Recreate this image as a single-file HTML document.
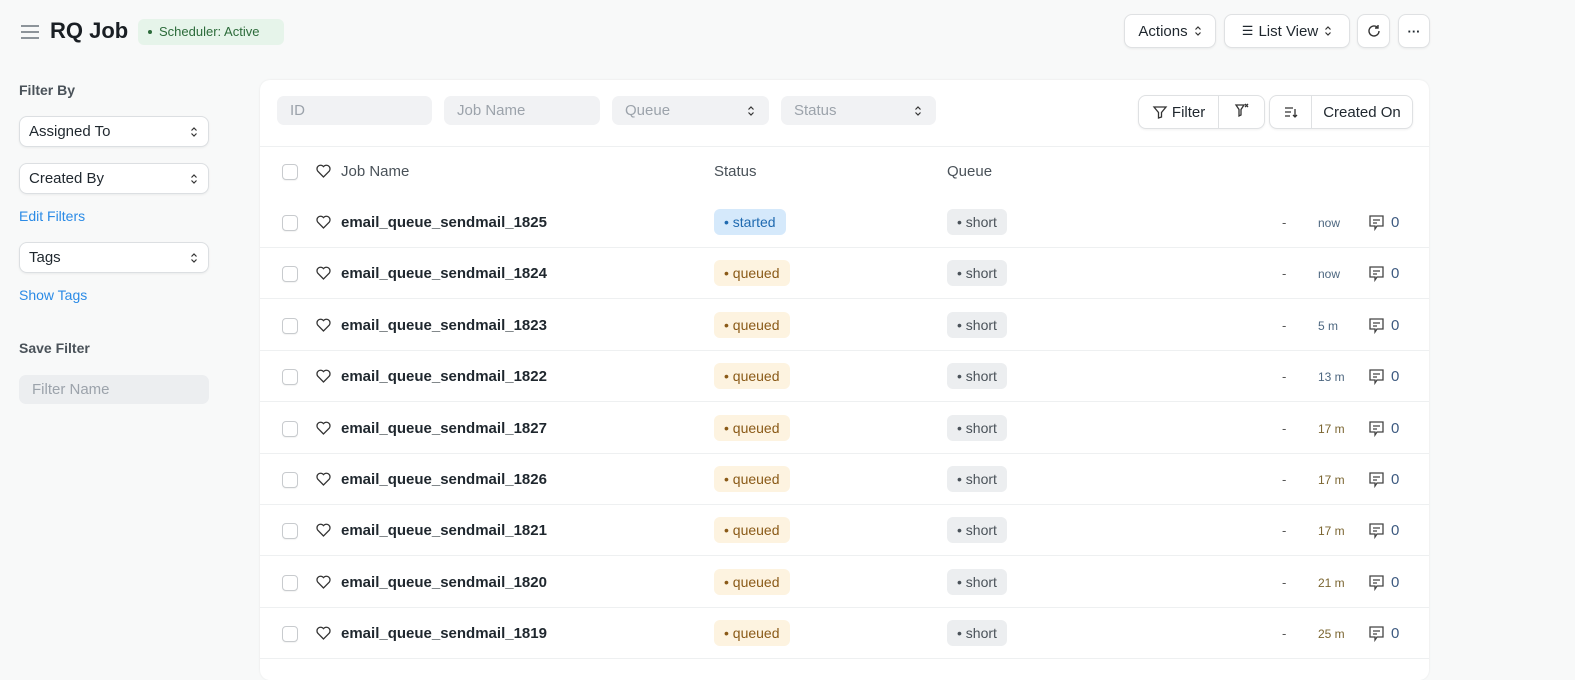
<!DOCTYPE html>
<html><head><meta charset="utf-8"><style>
*{box-sizing:border-box;margin:0;padding:0}
body{width:1575px;height:664px;overflow:hidden;background:#f8f9f9;font-family:"Liberation Sans",sans-serif;color:#1f272e;position:relative}
.a{position:absolute}
.btn{position:absolute;background:#fff;border:1px solid #dfe1e3;border-radius:8px;box-shadow:0 1px 2px rgba(0,0,0,.06);font-size:15px;display:flex;align-items:center;justify-content:center}
.sel{position:absolute;left:19px;width:190px;height:31px;background:#fff;border:1px solid #dcdfe2;border-radius:8px;box-shadow:0 1px 2px rgba(0,0,0,.06);font-size:15px;padding-left:9px;line-height:29px}
.chev{position:absolute;right:10px;top:9px}
.inp{position:absolute;top:96px;height:29px;background:#f1f2f4;border-radius:7px;color:#9ca3ab;font-size:15px;padding-left:13px;line-height:29px}
.lbl{position:absolute;left:19px;font-size:14px;color:#4a5259;font-weight:bold}
.link{position:absolute;left:19px;font-size:14px;color:#2b8be6}
.card{position:absolute;left:260px;top:80px;width:1169px;height:600px;background:#fff;border-radius:10px;box-shadow:0 0 2px rgba(0,0,0,.08)}
.row{position:absolute;left:260px;width:1169px;height:51px;border-bottom:1px solid #eef0f1}
.cb{position:absolute;left:22px;width:16px;height:16px;border:1px solid #c8cbce;border-radius:4px;background:#fff;box-shadow:0 1px 1px rgba(0,0,0,.05)}
.hrt{position:absolute;left:56px}
.nm{position:absolute;left:81px;font-size:15px;font-weight:bold}
.pill{position:absolute;height:26px;border-radius:6px;font-size:14px;line-height:26px;padding:0 10px}
.st{left:454px;background:#d5e9fb;color:#1f6ab0}
.qu{left:454px;background:#fdf3e0;color:#8a5a17}
.sh{left:687px;background:#eceef0;color:#4a5259}
.dash{position:absolute;left:1022px;font-size:13px;color:#555}
.tm{position:absolute;left:1058px;font-size:12px;color:#4d6780}
.cm{position:absolute;left:1108px;}
.zero{position:absolute;left:1131px;font-size:15px;color:#3d5a80}
</style></head><body>
<div class="a" style="left:21px;top:25px;width:18px;height:2px;background:#8d949a;box-shadow:0 6px 0 #8d949a,0 12px 0 #8d949a"></div>
<div class="a" style="left:50px;top:18px;font-size:22px;font-weight:bold;color:#1a1f24">RQ Job</div>
<div class="a" style="left:138px;top:19px;width:146px;height:26px;background:#e6f4ea;border-radius:6px;font-size:13px;color:#2c6b3a;line-height:26px;padding-left:21px">Scheduler: Active<span class="a" style="left:10px;top:11px;width:4px;height:4px;border-radius:50%;background:#2c6b3a"></span></div>
<div class="btn" style="left:1124px;top:14px;width:92px;height:34px">Actions <svg style="margin-left:6px" width="8" height="12" viewBox="0 0 8 12" fill="none" stroke="#333" stroke-width="1.2"><path d="M1.5 4.5L4 2l2.5 2.5M1.5 7.5L4 10l2.5-2.5"/></svg></div>
<div class="btn" style="left:1224px;top:14px;width:126px;height:34px"><span style="font-size:13px;margin-right:5px">☰</span>List View <svg style="margin-left:6px" width="8" height="12" viewBox="0 0 8 12" fill="none" stroke="#333" stroke-width="1.2"><path d="M1.5 4.5L4 2l2.5 2.5M1.5 7.5L4 10l2.5-2.5"/></svg></div>
<div class="btn" style="left:1357px;top:14px;width:33px;height:34px"><svg width="16" height="16" viewBox="0 0 16 16" fill="none" stroke="#333" stroke-width="1.4"><path d="M13 8a5 5 0 1 1-1.6-3.7M12 2v3h-3"/></svg></div>
<div class="btn" style="left:1398px;top:14px;width:32px;height:34px;font-weight:bold;font-size:13px">···</div>

<div class="lbl" style="top:82px">Filter By</div>
<div class="sel" style="top:116px">Assigned To<svg class="chev" width="8" height="12" viewBox="0 0 8 12" fill="none" stroke="#333" stroke-width="1.2"><path d="M1.5 4.5L4 2l2.5 2.5M1.5 7.5L4 10l2.5-2.5"/></svg></div>
<div class="sel" style="top:163px">Created By<svg class="chev" width="8" height="12" viewBox="0 0 8 12" fill="none" stroke="#333" stroke-width="1.2"><path d="M1.5 4.5L4 2l2.5 2.5M1.5 7.5L4 10l2.5-2.5"/></svg></div>
<div class="link" style="top:208px">Edit Filters</div>
<div class="sel" style="top:242px">Tags<svg class="chev" width="8" height="12" viewBox="0 0 8 12" fill="none" stroke="#333" stroke-width="1.2"><path d="M1.5 4.5L4 2l2.5 2.5M1.5 7.5L4 10l2.5-2.5"/></svg></div>
<div class="link" style="top:287px">Show Tags</div>
<div class="lbl" style="top:340px">Save Filter</div>
<div class="a" style="left:19px;top:375px;width:190px;height:29px;background:#eceef0;border-radius:7px;font-size:15px;color:#9ca3ab;line-height:29px;padding-left:13px">Filter Name</div>

<div class="card"></div>
<div class="inp" style="left:277px;width:155px">ID</div>
<div class="inp" style="left:444px;width:156px">Job Name</div>
<div class="inp" style="left:612px;width:157px">Queue<svg class="a" style="right:14px;top:9px" width="8" height="12" viewBox="0 0 8 12" fill="none" stroke="#333" stroke-width="1.2"><path d="M1.5 4.5L4 2l2.5 2.5M1.5 7.5L4 10l2.5-2.5"/></svg></div>
<div class="inp" style="left:781px;width:155px">Status<svg class="a" style="right:14px;top:9px" width="8" height="12" viewBox="0 0 8 12" fill="none" stroke="#333" stroke-width="1.2"><path d="M1.5 4.5L4 2l2.5 2.5M1.5 7.5L4 10l2.5-2.5"/></svg></div>
<div class="btn" style="left:1138px;top:95px;width:127px;height:34px;justify-content:flex-start"><span style="width:80px;display:flex;align-items:center;justify-content:center;border-right:1px solid #dfe1e3;height:100%"><svg width="16" height="16" viewBox="0 0 16 16" fill="none" stroke="#333" stroke-width="1.3"><path d="M2 3h12l-4.5 5.5V13l-3 1V8.5z"/></svg>&nbsp;Filter</span><span style="flex:1;text-align:center"><svg width="16" height="16" viewBox="0 0 16 16" fill="none" stroke="#333" stroke-width="1.3"><path d="M2 3h8l-3 4.5V13l-2 1V7.5zM11 2l3 3M14 2l-3 3"/></svg></span></div>
<div class="btn" style="left:1269px;top:95px;width:144px;height:34px;justify-content:flex-start"><span style="width:42px;height:100%;border-right:1px solid #dfe1e3;display:flex;align-items:center;justify-content:center"><svg width="16" height="16" viewBox="0 0 16 16" fill="none" stroke="#333" stroke-width="1.3"><path d="M2 4h8M2 8h6M2 12h5M12 5v8M10 11l2 2 2-2"/></svg></span><span style="flex:1;text-align:center">Created On</span></div>
<div class="a" style="left:260px;top:146px;width:1169px;height:1px;background:#eef0f1"></div>

<div class="row" style="top:146px;border:none">
<div class="cb" style="top:18px"></div><svg class="hrt" style="top:18px" width="15" height="14" viewBox="0 0 15 14" fill="none" stroke="#333" stroke-width="1.3"><path d="M7.5 13L1.8 7.2A3.3 3.3 0 0 1 7.5 2.6a3.3 3.3 0 0 1 5.7 4.6z"/></svg>
<div class="a" style="left:81px;top:17px;font-size:15px;color:#4a5259">Job Name</div>
<div class="a" style="left:454px;top:17px;font-size:15px;color:#4a5259">Status</div>
<div class="a" style="left:687px;top:17px;font-size:15px;color:#4a5259">Queue</div>
</div>
<script>
const d=[["1825","started","now"],["1824","queued","now"],["1823","queued","5 m"],["1822","queued","13 m"],["1827","queued","17 m"],["1826","queued","17 m"],["1821","queued","17 m"],["1820","queued","21 m"],["1819","queued","25 m"]];
let h="";d.forEach((r,i)=>{const t=197+i*51.4;const c=i>3?"#7a6530":"#4d6780";
h+=`<div class="row" style="top:${t}px"><div class="cb" style="top:18px"></div><svg class="hrt" style="top:18px" width="15" height="14" viewBox="0 0 15 14" fill="none" stroke="#333" stroke-width="1.3"><path d="M7.5 13L1.8 7.2A3.3 3.3 0 0 1 7.5 2.6a3.3 3.3 0 0 1 5.7 4.6z"/></svg><div class="nm" style="top:17px">email_queue_sendmail_${r[0]}</div><div class="pill ${r[1]=='started'?'st':'qu'}" style="top:12px">• ${r[1]}</div><div class="pill sh" style="top:12px">• short</div><div class="dash" style="top:18px">-</div><div class="tm" style="top:19px;color:${c}">${r[2]}</div><svg class="cm" style="top:17px" width="17" height="17" viewBox="0 0 17 17" fill="none" stroke="#444" stroke-width="1.3"><path d="M2 2h13v10H9l-2 3v-3H2z M5 6h7M5 9h4"/></svg><div class="zero" style="top:17px">0</div></div>`});
document.write(h);
</script>
</body></html>
